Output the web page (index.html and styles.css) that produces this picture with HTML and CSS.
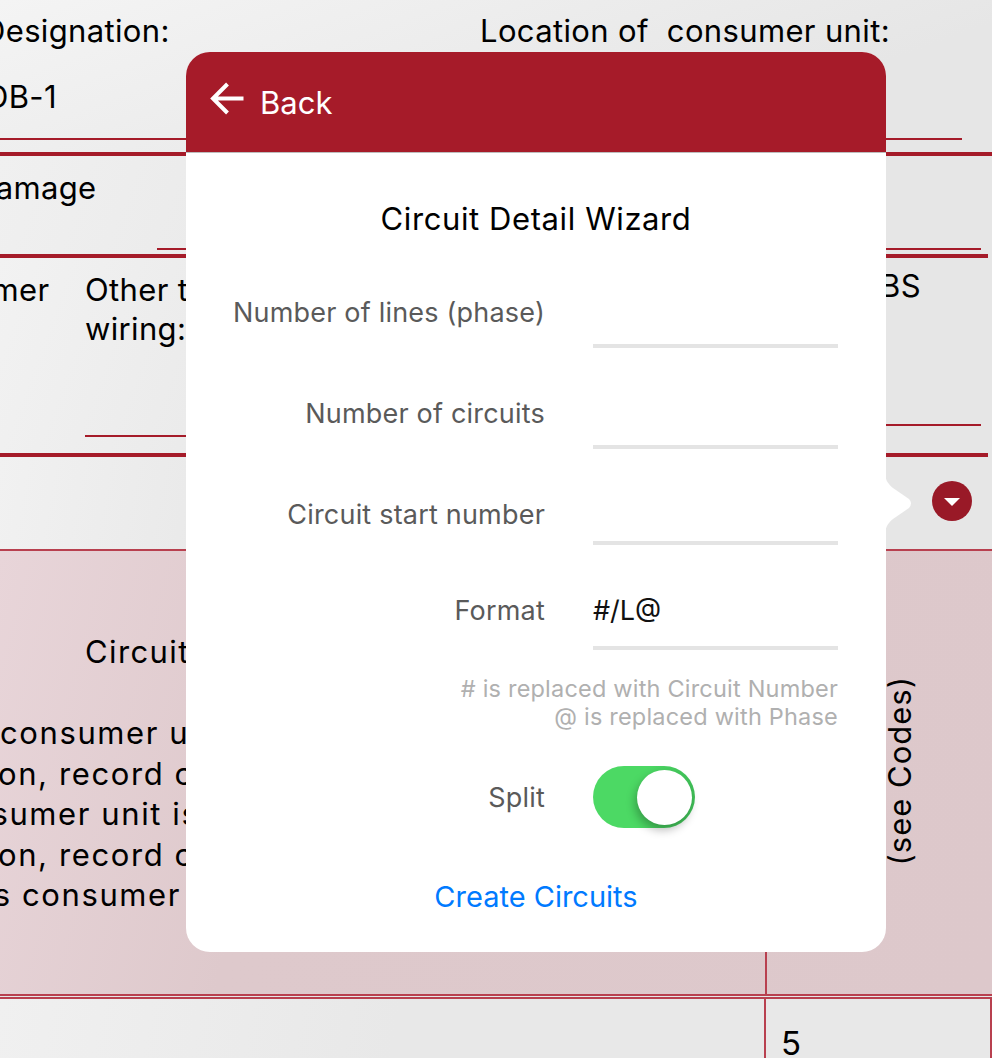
FILE: index.html
```html
<!DOCTYPE html>
<html lang="en">
<head>
<meta charset="utf-8">
<title>Circuit Detail Wizard</title>
<link rel="stylesheet" href="styles.css">
</head>
<body>
<div class="sheet">
  <section class="row row-top">
    <div class="top-cols">
      <div class="clip-d">
        <div class="txt">Designation:</div>
        <div class="txt value">DB-1</div>
      </div>
      <div class="txt">Location of&nbsp; consumer unit:</div>
    </div>
  </section>
  <section class="row row-damage">
    <div class="txt damage">Damage</div>
    <div class="thin-line"></div>
  </section>
  <section class="row row-wiring">
    <div class="txt cust">Customer</div>
    <div class="other">Other to<br>wiring:</div>
    <div class="txt bs">BS</div>
  </section>
  <section class="row row-drop">
    <span class="drop"><span class="tri"></span></span>
  </section>
  <section class="pink">
    <div class="pink-main">
      <div class="txt circuit">Circuit</div>
      <div class="txt para">
        <div class="l1">consumer unit</div>
        <div class="l2">on, record circuit</div>
        <div class="l3">consumer unit is</div>
        <div class="l4">on, record circuit</div>
        <div class="l5">this consumer unit</div>
      </div>
    </div>
    <div class="pink-side"><span class="txt codes">(see Codes)</span></div>
  </section>
  <section class="last">
    <div class="last-main"></div>
    <div class="last-cell txt">5</div>
  </section>
</div>

<div class="pop">
  <svg class="pop-arrow" viewBox="0 0 28 66" aria-hidden="true"><path d="M0 0C0 8 2 12 8 17L24 28Q28 32 24 37L8 48C2 53 0 57 0 66Z"/></svg>
  <header class="pop-head">
    <svg class="back-icon" viewBox="0 0 34 34" aria-hidden="true"><path d="M33 16.500H3M17 2 2.500 16.500 17 31"/></svg>
    <span class="back">Back</span>
  </header>
  <h1 class="title">Circuit Detail Wizard</h1>
  <div class="field f1"><label class="lbl">Number of lines (phase)</label><div class="inp"></div></div>
  <div class="field f2"><label class="lbl">Number of circuits</label><div class="inp"></div></div>
  <div class="field f3"><label class="lbl">Circuit start number</label><div class="inp"></div></div>
  <div class="field f4"><label class="lbl">Format</label><div class="inp">#/L@</div></div>
  <p class="hint"># is replaced with Circuit Number<br>@ is replaced with Phase</p>
  <div class="split"><span class="lbl">Split</span><span class="switch"><span class="thumb"></span></span></div>
  <div class="create">Create Circuits</div>
</div>
</body>
</html>
```
FILE: styles.css
```css
* { box-sizing: border-box; }
html, body { margin: 0; padding: 0; }
body {
  width: 992px; height: 1058px; overflow: hidden; position: relative;
  font-family: Inter, "Liberation Sans", sans-serif; background: #e6e6e6; color: #000;
}
.sheet { width: 992px; }
.txt { font-size: 31px; line-height: 40px; letter-spacing: .35px; white-space: nowrap; }
.row { overflow: hidden; }

.row-top {
  height: 156px; border-bottom: 4px solid #a51b29;
  background: linear-gradient(160deg, #f4f4f4 0, #e6e6e6 75%);
}
.top-cols {
  display: grid; grid-template-columns: 480px 1fr;
  height: 140px; margin-right: 30px; padding-top: 11px;
  border-bottom: 2px solid #a51b29;
}
.clip-d { margin-left: -17px; }
.value { margin-top: 26px; margin-left: 3px; }

.row-damage {
  height: 102px; margin-right: 4px; border-bottom: 4px solid #a51b29;
  background: linear-gradient(110deg, #f0f0f0 0, #e6e6e6 45%);
  padding-top: 12px;
}
.damage { margin-left: -27px; }
.thin-line { height: 2px; margin: 40px 7px 0 157px; background: #a51b29; }

.row-wiring {
  height: 199px; margin-right: 4px; border-bottom: 4px solid #a51b29;
  background: linear-gradient(110deg, #f2f2f2 0, #e6e6e6 40%);
  display: grid; grid-template-columns: 85px 681px 215px;
  align-items: start;
}
.cust { margin: 12px 0 0 -96px; }
.other {
  font-size: 31px; letter-spacing: .35px; line-height: 39px; height: 179px; padding: 12px 0 0 0;
  border-bottom: 2px solid #a51b29; white-space: nowrap;
}
.bs { height: 168px; padding: 8px 0 0 114px; border-bottom: 2px solid #a51b29; }

.row-drop {
  height: 94px; border-bottom: 2px solid #b8404f;
  background: linear-gradient(100deg, #f1f1f1 0, #e6e6e6 30%);
  display: flex; justify-content: flex-end; align-items: center;
  padding: 0 20px 4px 0;
}
.drop {
  width: 40px; height: 40px; border-radius: 50%; background: #991927;
  display: flex; align-items: center; justify-content: center;
}
.tri {
  width: 0; height: 0; margin-top: 2px;
  border-left: 8px solid transparent; border-right: 8px solid transparent; border-top: 8px solid #fff;
}

.pink {
  height: 445px; border-bottom: 2px solid #b8404f;
  background: linear-gradient(105deg, #e8d5d9 0, #dec9cc 30%, #ddc8cb 100%);
  display: grid; grid-template-columns: 767px 225px;
}
.pink-main { border-right: 2px solid #b8404f; overflow: hidden; padding-top: 81px; }
.circuit { margin-left: 85px; letter-spacing: 1.400px; }
.para { margin-top: 41px; line-height: 40.500px; letter-spacing: 1.600px; }
.l1 { margin-left: 0; }
.l2 { margin-left: -2px; }
.l3 { margin-left: -68px; }
.l4 { margin-left: -2px; }
.l5 { margin-left: -47px; }
.pink-side { display: flex; align-items: center; justify-content: center; padding: 0 0 4px 40px; }
.codes { writing-mode: vertical-rl; transform: rotate(180deg); letter-spacing: 1px; }

.last {
  height: 70px; margin-top: 1px; border-top: 2px solid #b8404f;
  background: linear-gradient(100deg, #f0f0f0 0, #e8e8e8 40%);
  display: grid; grid-template-columns: 766px 226px;
}
.last-main { border-right: 2px solid #b8404f; }
.last-cell { border-right: 2px solid #b8404f; padding: 24px 0 0 15px; font-size: 33px; }

.pop {
  position: absolute; left: 186px; top: 52px; width: 700px; height: 900px;
  background: #fff; border-radius: 24px;
}
.pop-arrow { position: absolute; left: 699px; top: 419px; width: 28px; height: 66px; fill: #fff; }
.pop-head {
  height: 101px; background: #a61b29; border-bottom: 1px solid #bdbdbd;
  border-radius: 24px 24px 0 0; display: flex; align-items: flex-start;
  padding: 30px 0 0 24px; color: #fff;
}
.back-icon { width: 35px; height: 34px; fill: none; stroke: #fff; stroke-width: 4; }
.back { font-size: 31px; line-height: 40px; margin: 1px 0 0 15px; }
.title { margin: 46px 0 0; font-size: 31px; line-height: 40px; letter-spacing: .6px; font-weight: 400; text-align: center; }

.field { display: grid; grid-template-columns: 359px 245px; column-gap: 48px; }
.lbl { font-size: 27px; line-height: 34px; letter-spacing: .2px; color: #5a5a5a; text-align: right; align-self: end; white-space: nowrap; }
.inp { border-bottom: 4px solid #e4e4e4; font-size: 27px; line-height: 34px; color: #111; display: flex; align-items: flex-end; }
.f1 { height: 109px; } .f1 .lbl { padding-bottom: 18px; }
.f2 { height: 101px; } .f2 .lbl { padding-bottom: 18px; }
.f3 { height: 96px; }  .f3 .lbl { padding-bottom: 13px; }
.f4 { height: 105px; } .f4 .lbl { padding-bottom: 22px; }
.f4 .inp { padding-bottom: 18px; }

.hint {
  margin: 25px 48px 0 0; font-size: 23.500px; line-height: 28px; letter-spacing: .2px; color: #b0b0b0; text-align: right;
}
.split {
  display: grid; grid-template-columns: 359px 102px; column-gap: 48px;
  margin-top: 35px; height: 62px; align-items: center;
}
.split .lbl { align-self: center; padding-top: 1px; }
.switch {
  display: block; position: relative; width: 102px; height: 62px; border-radius: 31px;
  background: linear-gradient(90deg, #4cd964 55%, #3fbf57 100%);
}
.thumb {
  position: absolute; right: 3px; top: 4px; width: 55px; height: 55px; border-radius: 50%;
  background: #fff; box-shadow: -2px 5px 10px rgba(0,0,0,.28);
}
.create { margin-top: 49px; font-size: 29px; line-height: 40px; color: #007aff; text-align: center; }
```
